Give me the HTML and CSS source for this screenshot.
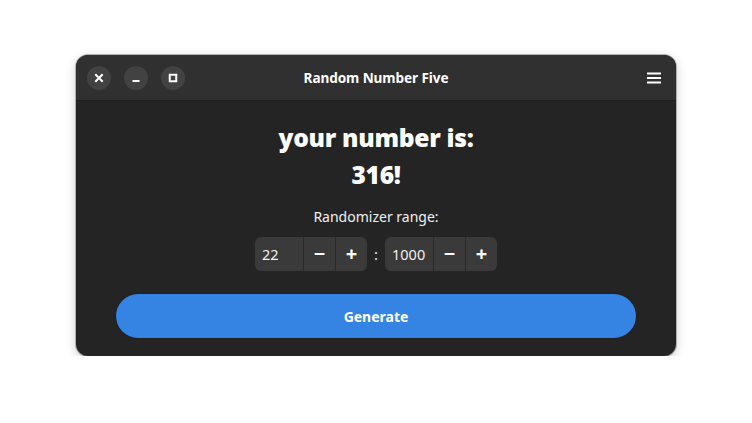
FILE: index.html
```html
<!DOCTYPE html>
<html>
<head>
<meta charset="utf-8">
<link rel="stylesheet" href="styles.css">
</head>
<body>
<div class="stage">
  <div class="window">
    <header class="headerbar">
      <div class="controls">
        <span class="wbtn"><svg width="10" height="10" viewBox="0 0 10 10"><path d="M2 2 L8 8 M8 2 L2 8" stroke="#fff" stroke-width="2" stroke-linecap="square"/></svg></span>
        <span class="wbtn"><svg width="10" height="10" viewBox="0 0 10 10"><rect x="1.5" y="7" width="7" height="2" fill="#fff"/></svg></span>
        <span class="wbtn"><svg width="10" height="10" viewBox="0 0 10 10"><rect x="1.75" y="1.75" width="6.5" height="6.5" fill="none" stroke="#fff" stroke-width="2"/></svg></span>
      </div>
      <div class="title">Random Number Five</div>
      <div class="menu"><svg width="14" height="12" viewBox="0 0 14 12"><rect x="0" y="0.5" width="14" height="2" fill="#fff"/><rect x="0" y="5" width="14" height="2" fill="#fff"/><rect x="0" y="9.5" width="14" height="2" fill="#fff"/></svg></div>
    </header>
    <main class="content">
      <div class="result">your number is:<br>316!</div>
      <div class="label">Randomizer range:</div>
      <div class="range">
        <div class="spin">
          <span class="value">22</span>
          <span class="sbtn">&minus;</span>
          <span class="sbtn">+</span>
        </div>
        <span class="colon">:</span>
        <div class="spin">
          <span class="value">1000</span>
          <span class="sbtn">&minus;</span>
          <span class="sbtn">+</span>
        </div>
      </div>
      <button class="generate">Generate</button>
    </main>
  </div>
</div>
</body>
</html>
```
FILE: styles.css
```css
html, body {
  margin: 0;
  padding: 0;
  background: #ffffff;
}
body {
  font-family: "Noto Sans", "Open Sans", sans-serif;
  color: #ffffff;
}
.stage {
  padding: 55px 0 0 76px;
}
.window {
  width: 600px;
  height: 301px;
  background: #242424;
  border-radius: 12px;
  overflow: hidden;
  box-shadow: 0 0 0 1px rgba(0,0,0,0.25), 0 3px 12px rgba(0,0,0,0.2);
  display: flex;
  flex-direction: column;
}
.headerbar {
  height: 46px;
  background: #303030;
  border-bottom: 1px solid #1e1e1e;
  box-sizing: border-box;
  display: grid;
  grid-template-columns: 1fr auto 1fr;
  align-items: center;
  padding: 0 15px 0 11px;
}
.controls {
  display: flex;
  gap: 13px;
}
.wbtn {
  width: 24px;
  height: 24px;
  border-radius: 50%;
  background: #424242;
  display: flex;
  align-items: center;
  justify-content: center;
}
.title {
  text-align: center;
  font-weight: 700;
  font-size: 13.6px;
  letter-spacing: -0.1px;
  padding-left: 4px;
}
.menu {
  justify-self: end;
  width: 14px;
  height: 12px;
  display: flex;
}
.content {
  flex: 1;
  display: flex;
  flex-direction: column;
  align-items: center;
  padding-top: 18px;
}
.result {
  font-family: "Open Sans", sans-serif;
  font-weight: 800;
  font-size: 24.6px;
  line-height: 37px;
  text-align: center;
  letter-spacing: -0.3px;
}
.label {
  margin-top: 14px;
  font-size: 14px;
  line-height: 20px;
  color: #f0f0f0;
}
.range {
  margin-top: 10px;
  display: flex;
  align-items: center;
  gap: 7px;
}
.spin {
  display: flex;
  height: 34px;
  background: #3a3a3a;
  border-radius: 6px;
  overflow: hidden;
}
.value {
  width: 48px;
  box-sizing: border-box;
  padding-left: 7px;
  display: flex;
  align-items: center;
  font-size: 14.5px;
  color: #f2f2f2;
}
.sbtn {
  width: 32px;
  border-left: 1px solid #2a2a2a;
  box-sizing: border-box;
  display: flex;
  align-items: center;
  justify-content: center;
  font-size: 20px;
  font-weight: 700;
  line-height: 1;
}
.colon {
  font-size: 15px;
  color: #e8e8e8;
}
.generate {
  margin-top: 23px;
  width: 520px;
  height: 44px;
  border: none;
  border-radius: 22px;
  background: #3584e4;
  color: #ffffff;
  font-family: "Noto Sans", sans-serif;
  font-weight: 700;
  font-size: 14px;
  box-shadow: 0 0 0 1px rgba(0,0,0,0.15);
}
```
